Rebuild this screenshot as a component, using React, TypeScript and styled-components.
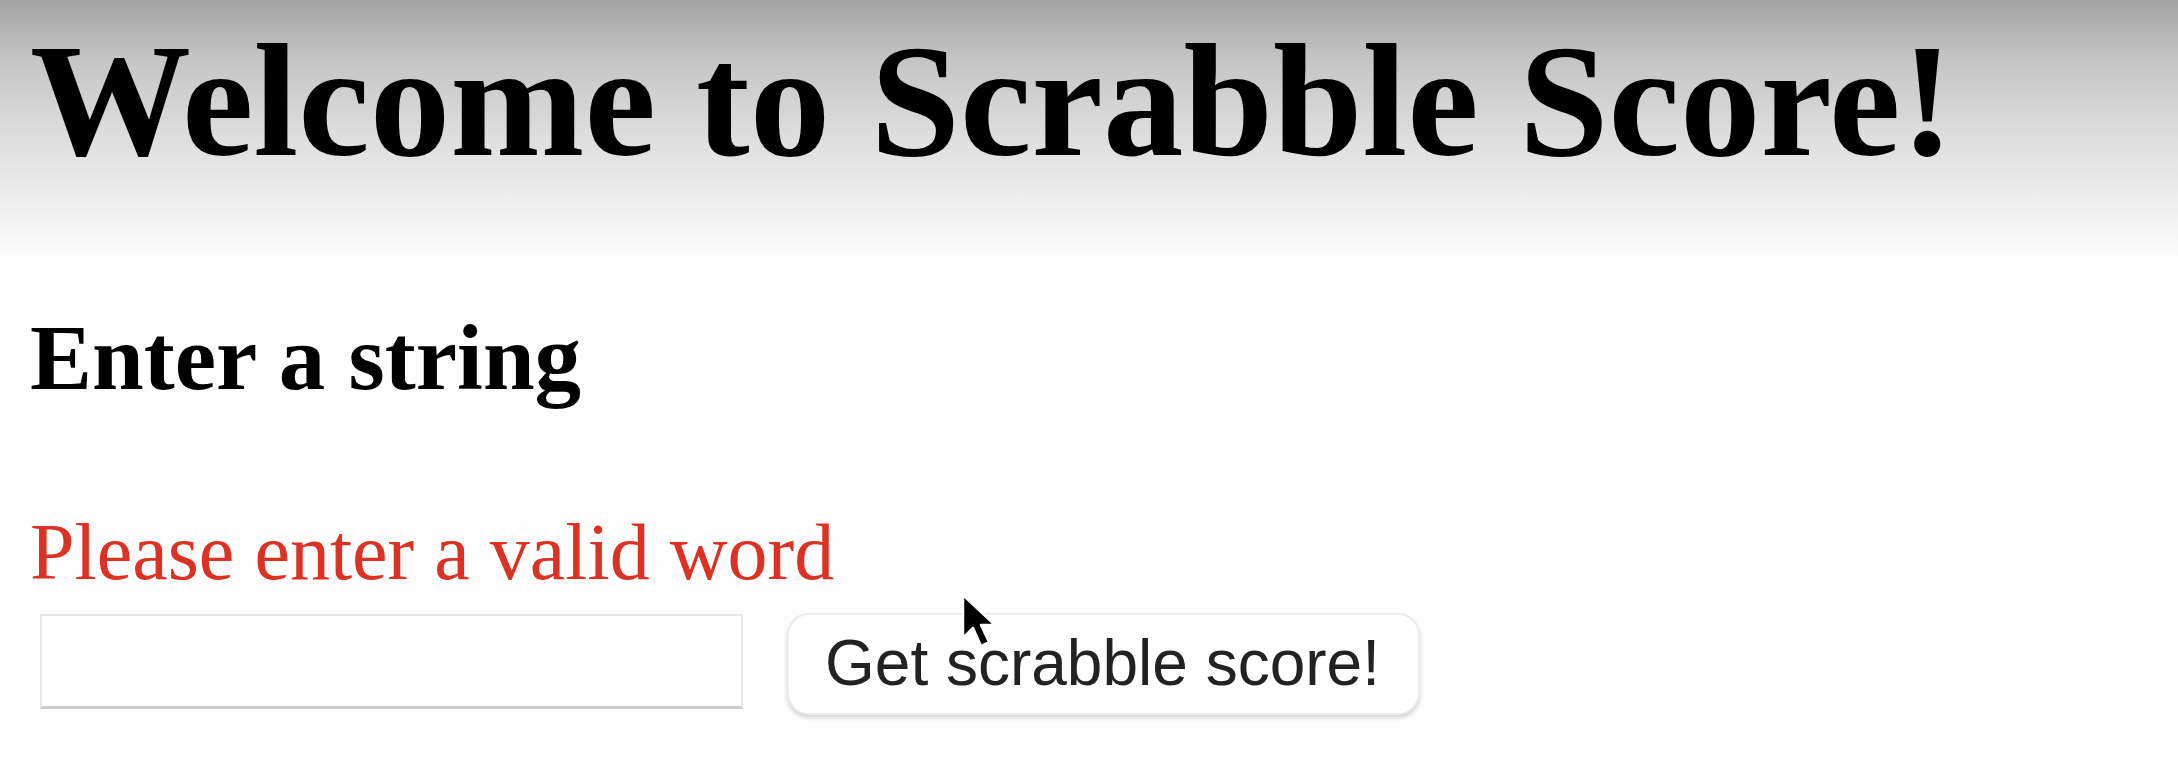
import React, { useState } from 'react';
import styled, { createGlobalStyle } from 'styled-components';

const GlobalStyle = createGlobalStyle`
  html, body {
    margin: 0;
    padding: 0;
    background: #fdfdfd;
  }
  body {
    font-family: "Liberation Serif", "Times New Roman", serif;
    overflow: hidden;
  }
`;

const Page = styled.div`
  position: relative;
  width: 2178px;
  height: 769px;
  background: #fdfdfd;
`;

const Header = styled.header`
  height: 262px;
  box-sizing: border-box;
  padding: 21px 0 0 30px;
  background: linear-gradient(to bottom, #a3a3a3 0%, #c4c4c4 22%, #dcdcdc 50%, #efefef 78%, #fdfdfd 100%);
`;

const Title = styled.h1`
  margin: 0;
  font-size: 161px;
  line-height: 161px;
  font-weight: bold;
  color: #000;
  white-space: nowrap;
`;

const Main = styled.main`
  padding: 49px 0 0 30px;
  display: flex;
  flex-direction: column;
`;

const SubTitle = styled.h2`
  margin: 0;
  font-size: 93px;
  line-height: 93px;
  font-weight: bold;
  color: #000;
`;

const ErrorText = styled.p`
  margin: 108px 0 0;
  font-size: 80px;
  line-height: 80px;
  color: #dc3223;
`;

const FormRow = styled.form`
  margin-top: 21px;
  display: flex;
  align-items: flex-start;
  gap: 44px;
  padding-left: 10px;
`;

const WordInput = styled.input`
  width: 703px;
  height: 95px;
  box-sizing: border-box;
  margin: 1px 0 0;
  border: 2px solid #e8e8e8;
  border-bottom: 3px solid #cdcdcd;
  background: #fefefe;
  font-size: 60px;
  font-family: "Liberation Sans", Arial, sans-serif;
  outline: none;
`;

const ScoreButton = styled.button`
  height: 102px;
  box-sizing: border-box;
  padding: 0 38px 2px 36px;
  border: 2px solid #ececec;
  border-radius: 22px;
  background: #ffffff;
  box-shadow: 0 3px 4px rgba(0, 0, 0, 0.16);
  font-family: "Liberation Sans", Arial, Helvetica, sans-serif;
  font-size: 64px;
  line-height: 64px;
  color: #222;
  cursor: default;
  white-space: nowrap;
`;

const Pointer = styled.svg`
  position: absolute;
  left: 959px;
  top: 591px;
  width: 40px;
  height: 62px;
  pointer-events: none;
`;

export default function App() {
  const [word, setWord] = useState('');

  return (
    <Page>
      <GlobalStyle />
      <Header>
        <Title>Welcome to Scrabble Score!</Title>
      </Header>
      <Main>
        <SubTitle>Enter a string</SubTitle>
        <ErrorText>Please enter a valid word</ErrorText>
        <FormRow onSubmit={e => e.preventDefault()}>
          <WordInput value={word} onChange={e => setWord(e.target.value)} />
          <ScoreButton type="submit">Get scrabble score!</ScoreButton>
        </FormRow>
      </Main>
      <Pointer viewBox="0 0 40 62">
        <path
          d="M4 4 L4 47 L14 37 L22 55 L30 51 L22 34 L36 34 Z"
          fill="#000"
          stroke="#fff"
          strokeWidth="2.5"
          strokeLinejoin="round"
        />
      </Pointer>
    </Page>
  );
}
